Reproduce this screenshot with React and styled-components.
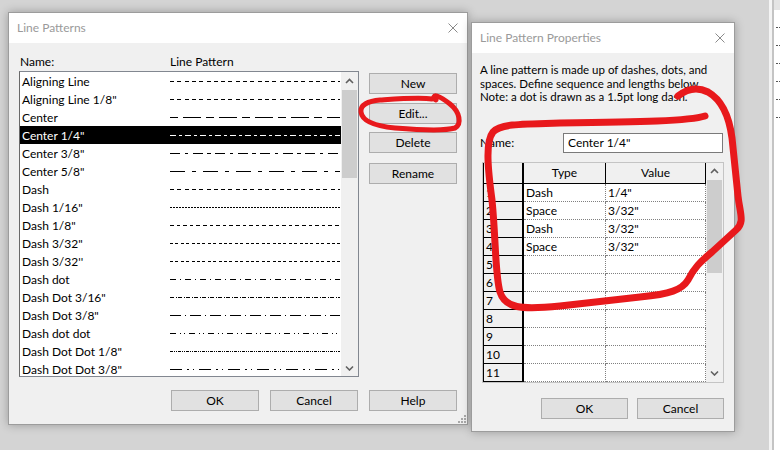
import styled, { createGlobalStyle } from "styled-components";

const GlobalStyle = createGlobalStyle`
  html, body {
    margin: 0;
    padding: 0;
  }
  body {
    background: #d4d4d4;
    font-family: Lato, "Noto Sans", sans-serif;
    font-size: 12px;
    color: #000;
  }
`;

const patterns = [
  ["Aligning Line", "4 3.3"],
  ['Aligning Line 1/8"', "4 3.3"],
  ["Center", "8 5 18 5"],
  ['Center 1/4"', "6 3 3 3"],
  ['Center 3/8"', "10 4.5 3.5 4.5"],
  ['Center 5/8"', "15 7 4 7"],
  ["Dash", "4 3.3"],
  ['Dash 1/16"', "1.5 1.5"],
  ['Dash 1/8"', "3.6 3"],
  ['Dash 3/32"', "3 2.4"],
  ["Dash 3/32''", "3 2.4"],
  ["Dash dot", "6 4 1 4"],
  ['Dash Dot 3/16"', "4 1.5 1 1.5"],
  ['Dash Dot 3/8"', "11 4 1 4"],
  ["Dash dot dot", "6 4 1 3 1 4"],
  ['Dash Dot Dot 1/8"', "3 1 1 1 1 1"],
  ['Dash Dot Dot 3/8"', "12 5 1.5 4 1.5 5"],
];

const segments = [
  ["Dash", '1/4"'],
  ["Space", '3/32"'],
  ["Dash", '3/32"'],
  ["Space", '3/32"'],
  ["", ""],
  ["", ""],
  ["", ""],
  ["", ""],
  ["", ""],
  ["", ""],
  ["", ""],
];

function CloseIcon() {
  return (
    <svg width="10" height="10" viewBox="0 0 10 10">
      <path d="M0.5 0.5 L9.5 9.5 M9.5 0.5 L0.5 9.5" stroke="#8a8a8a" strokeWidth="1" />
    </svg>
  );
}

function Chevron({ down }) {
  return (
    <svg width="9" height="6" viewBox="0 0 9 6">
      <polyline
        points={down ? "1,1.5 4.5,5 8,1.5" : "1,5 4.5,1.5 8,5"}
        fill="none"
        stroke="#606060"
        strokeWidth="1.6"
      />
    </svg>
  );
}

function PatternLine({ dash, color }) {
  return (
    <svg width="170" height="18" viewBox="0 0 170 18" shapeRendering="crispEdges">
      <line x1="0" y1="9.5" x2="170" y2="9.5" stroke={color} strokeWidth="1" strokeDasharray={dash} />
    </svg>
  );
}

function ScrollBar({ thumbGap, thumbHeight }) {
  return (
    <Track>
      <ArrowBox>
        <Chevron />
      </ArrowBox>
      <Thumb $gap={thumbGap} $h={thumbHeight} />
      <TrackFill />
      <ArrowBox>
        <Chevron down />
      </ArrowBox>
    </Track>
  );
}

function App() {
  return (
    <>
      <GlobalStyle />
      <Desktop>
        <BackPanel>
          <BackTop />
          {[0, 1, 2, 3, 4, 5].map((i) => (
            <BackRow key={i} />
          ))}
        </BackPanel>

        <Window $x={8} $y={12} $w={460} $h={413}>
          <TitleBar>
            <span>Line Patterns</span>
            <CloseIcon />
          </TitleBar>
          <Body $pad="12px 10px 0 10px">
            <MainRow>
              <ListColumn>
                <ListLabels>
                  <span>Name:</span>
                  <span>Line Pattern</span>
                </ListLabels>
                <ListBox>
                  <Rows>
                    {patterns.map(([name, dash], i) => (
                      <PatternRow key={name} $selected={i === 3}>
                        <span>{name}</span>
                        <PatternLine dash={dash} color={i === 3 ? "#fff" : "#000"} />
                      </PatternRow>
                    ))}
                  </Rows>
                  <ScrollBar thumbGap={1} thumbHeight={88} />
                </ListBox>
              </ListColumn>
              <ButtonColumn>
                <Button>New</Button>
                <Button $mt={9}>Edit...</Button>
                <Button $mt={8}>Delete</Button>
                <Button $mt={10}>Rename</Button>
              </ButtonColumn>
            </MainRow>
            <Footer $mt={13} $gap={11}>
              <Button>OK</Button>
              <Button>Cancel</Button>
              <Button>Help</Button>
            </Footer>
          </Body>
          <Grip width="10" height="10" viewBox="0 0 10 10">
            {[
              [8, 2],
              [5, 5],
              [8, 5],
              [2, 8],
              [5, 8],
              [8, 8],
            ].map(([x, y]) => (
              <rect key={`${x}-${y}`} x={x} y={y} width="2" height="2" fill="#a8a8a8" />
            ))}
          </Grip>
        </Window>

        <Window $x={471} $y={22} $w={264} $h={410}>
          <TitleBar>
            <span>Line Pattern Properties</span>
            <CloseIcon />
          </TitleBar>
          <Body $pad="10px 10px 0 8px">
            <Description>
              A line pattern is made up of dashes, dots, and
              <br />
              spaces. Define sequence and lengths below.
              <br />
              Note: a dot is drawn as a 1.5pt long dash.
            </Description>
            <NameRow>
              <NameLabel>Name:</NameLabel>
              <TextInput defaultValue={'Center 1/4"'} readOnly />
            </NameRow>
            <GridFrame>
              <GridTable>
                <GridRow $h={21}>
                  <HeadCell $first />
                  <HeadCell>Type</HeadCell>
                  <HeadCell>Value</HeadCell>
                </GridRow>
                {segments.map(([type, value], i) => (
                  <GridRow key={i} $h={18}>
                    <RowHead>{i + 1}</RowHead>
                    <DataCell>{type}</DataCell>
                    <DataCell>{value}</DataCell>
                  </GridRow>
                ))}
              </GridTable>
              <ScrollBar thumbGap={0} thumbHeight={93} />
            </GridFrame>
            <Footer $mt={15} $gap={9}>
              <Button $w={87}>OK</Button>
              <Button $w={87}>Cancel</Button>
            </Footer>
          </Body>
        </Window>

        <Annotations width="780" height="450" viewBox="0 0 780 450">
          <path
            d="M432 99 C420 97 395 99 380 100 C368 101 360 105 361 112 C362 121 375 126 395 128 C420 130 445 131 455 128 C462 124 460 112 450 104 C445 100 440 97 437 96 C434 95 432 98 436 100"
            strokeWidth="5"
          />
          <path
            d="M678 96 C688 88 698 87 708 92 C722 100 729 115 732 138 L738 196 C740 214 745 222 736 230 L712 252 C700 262 694 268 688 280 C682 290 670 294 640 297 L560 306 C520 310 505 308 500 292 C495 275 496 240 492 200 C488 170 485 142 493 132 C500 124 520 124 560 123 C640 122 690 121 705 116"
            strokeWidth="7"
          />
        </Annotations>
      </Desktop>
    </>
  );
}

const Desktop = styled.div`
  position: relative;
  width: 780px;
  height: 450px;
  overflow: hidden;
  background: #d4d4d4;
`;

const BackPanel = styled.div`
  position: absolute;
  left: 769px;
  top: 0;
  width: 11px;
  height: 450px;
  box-sizing: border-box;
  border-left: 3px solid #f4f4f4;
  background: #fff;
  box-shadow: inset 2px 0 0 #c4c4c4;
`;

const BackTop = styled.div`
  height: 10px;
  margin-left: 2px;
  background: #e4e4e4;
`;

const BackRow = styled.div`
  height: 17px;
  margin-left: 4px;
  border-bottom: 1px dotted #555;
`;

const Window = styled.div`
  position: absolute;
  left: ${(p) => p.$x}px;
  top: ${(p) => p.$y}px;
  width: ${(p) => p.$w}px;
  height: ${(p) => p.$h}px;
  box-sizing: border-box;
  display: flex;
  flex-direction: column;
  background: #f0f0f0;
  border: 1px solid #9c9c9c;
  box-shadow: 0 0 9px rgba(0, 0, 0, 0.28);
`;

const TitleBar = styled.div`
  flex: none;
  height: 30px;
  display: flex;
  align-items: center;
  justify-content: space-between;
  padding: 0 9px 1px 8px;
  box-sizing: border-box;
  background: #fff;
  color: #9a9a9a;
`;

const Body = styled.div`
  flex: 1;
  display: flex;
  flex-direction: column;
  padding: ${(p) => p.$pad};
`;

const MainRow = styled.div`
  display: flex;
  gap: 10px;
`;

const ListColumn = styled.div`
  width: 340px;
  display: flex;
  flex-direction: column;
`;

const ListLabels = styled.div`
  height: 16px;
  display: grid;
  grid-template-columns: 150px 1fr;
  align-items: start;
  padding-left: 1px;
  line-height: 13px;
`;

const ListBox = styled.div`
  height: 306px;
  box-sizing: border-box;
  display: flex;
  overflow: hidden;
  background: #fff;
  border: 1px solid #828790;
  border-left-color: #6a6a6a;
`;

const Rows = styled.div`
  flex: 1;
  overflow: hidden;
`;

const PatternRow = styled.div`
  height: 18px;
  display: grid;
  grid-template-columns: 148px 170px;
  align-items: center;
  padding-left: 2px;
  background: ${(p) => (p.$selected ? "#000" : "transparent")};
  color: ${(p) => (p.$selected ? "#fff" : "#000")};
  white-space: nowrap;

  svg {
    display: block;
  }
`;

const Track = styled.div`
  flex: none;
  width: 17px;
  display: flex;
  flex-direction: column;
  background: #f0f0f0;
`;

const ArrowBox = styled.div`
  flex: none;
  height: 17px;
  display: flex;
  align-items: center;
  justify-content: center;
`;

const Thumb = styled.div`
  flex: none;
  margin: ${(p) => p.$gap}px 1px 0 1px;
  height: ${(p) => p.$h}px;
  background: #cdcdcd;
`;

const TrackFill = styled.div`
  flex: 1;
`;

const ButtonColumn = styled.div`
  width: 88px;
  display: flex;
  flex-direction: column;
  padding-top: 18px;
`;

const Button = styled.button`
  width: ${(p) => p.$w || 88}px;
  height: 21px;
  margin-top: ${(p) => p.$mt || 0}px;
  padding: 0;
  box-sizing: border-box;
  background: #e1e1e1;
  border: 1px solid #adadad;
  border-radius: 0;
  font: inherit;
  color: #000;
`;

const Footer = styled.div`
  display: flex;
  justify-content: flex-end;
  gap: ${(p) => p.$gap}px;
  margin-top: ${(p) => p.$mt}px;
`;

const Grip = styled.svg`
  position: absolute;
  right: 1px;
  bottom: 1px;
`;

const Description = styled.p`
  margin: 0;
  font-size: 11.5px;
  line-height: 13.5px;
  white-space: nowrap;
`;

const NameRow = styled.div`
  display: flex;
  align-items: center;
  margin-top: 29px;
`;

const NameLabel = styled.span`
  width: 83px;
`;

const TextInput = styled.input`
  width: 160px;
  height: 20px;
  box-sizing: border-box;
  margin: 0;
  padding: 0 4px;
  border: 1px solid #7a7a7a;
  background: #fff;
  font: inherit;
  color: #000;
  outline: none;
`;

const GridFrame = styled.div`
  width: 242px;
  height: 221px;
  box-sizing: border-box;
  margin: 9px 0 0 2px;
  display: flex;
  background: #fff;
  border: 1px solid #c4c4c4;
`;

const GridTable = styled.div`
  width: 223px;
  display: flex;
  flex-direction: column;
`;

const GridRow = styled.div`
  height: ${(p) => p.$h}px;
  display: grid;
  grid-template-columns: 41px 82px 100px;
`;

const HeadCell = styled.div`
  box-sizing: border-box;
  display: flex;
  align-items: center;
  justify-content: center;
  background: #f0f0f0;
  border-right: ${(p) => (p.$first ? 2 : 1)}px solid #000;
  border-bottom: 1px solid #000;
  border-left: ${(p) => (p.$first ? "1px solid #000" : "none")};
`;

const RowHead = styled.div`
  box-sizing: border-box;
  display: flex;
  align-items: center;
  padding-left: 2px;
  background: #f0f0f0;
  border-left: 1px solid #000;
  border-right: 2px solid #000;
  border-bottom: 1px solid #000;
`;

const DataCell = styled.div`
  box-sizing: border-box;
  display: flex;
  align-items: center;
  padding-left: 2px;
  border-right: 1px dotted #808080;
  border-bottom: 1px dotted #808080;
`;

const Annotations = styled.svg`
  position: absolute;
  left: 0;
  top: 0;
  pointer-events: none;

  path {
    fill: none;
    stroke: #e8191c;
    stroke-linecap: round;
    stroke-linejoin: round;
  }
`;

export default App;
